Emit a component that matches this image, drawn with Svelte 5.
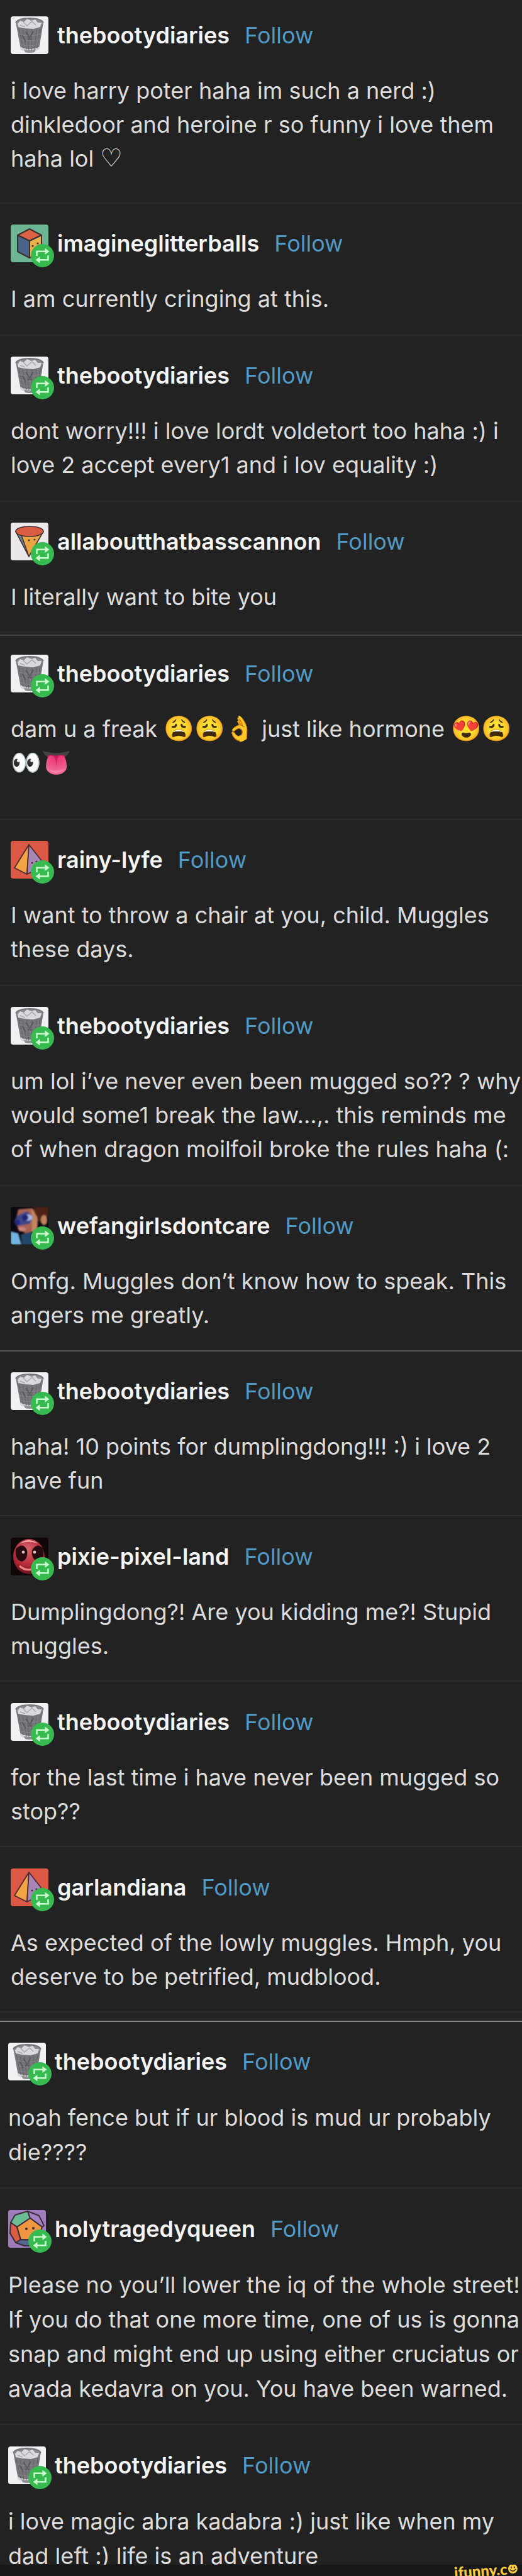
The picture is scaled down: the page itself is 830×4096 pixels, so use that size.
<script>
  const sections = [
    {
      id: 'opening',
      posts: [
        { user: 'thebootydiaries', avatar: 'bin', original: true, roomy: true, lines: ['i love harry poter haha im such a nerd :)', 'dinkledoor and heroine r so funny i love them', 'haha lol ♡'] },
        { user: 'imagineglitterballs', avatar: 'cube', lines: ['I am currently cringing at this.'] },
        { user: 'thebootydiaries', avatar: 'bin', lines: ['dont worry!!! i love lordt voldetort too haha :) i', 'love 2 accept every1 and i lov equality :)'] },
        { user: 'allaboutthatbasscannon', avatar: 'cone', lines: ['I literally want to bite you'] }
      ]
    },
    {
      id: 'middle',
      posts: [
        { user: 'thebootydiaries', avatar: 'bin', airy: true, lines: ['dam u a freak 😩😩👌 just like hormone 😍😩', '👀👅'] },
        { user: 'rainy-lyfe', avatar: 'pyramid', lines: ['I want to throw a chair at you, child. Muggles', 'these days.'] },
        { user: 'thebootydiaries', avatar: 'bin', lines: ['um lol i’ve never even been mugged so?? ? why', 'would some1 break the law...,. this reminds me', 'of when dragon moilfoil broke the rules haha (:'] },
        { user: 'wefangirlsdontcare', avatar: 'hero', lines: ['Omfg. Muggles don’t know how to speak. This', 'angers me greatly.'] }
      ]
    },
    {
      id: 'later',
      posts: [
        { user: 'thebootydiaries', avatar: 'bin', lines: ['haha! 10 points for dumplingdong!!! :) i love 2', 'have fun'] },
        { user: 'pixie-pixel-land', avatar: 'mask', lines: ['Dumplingdong?! Are you kidding me?! Stupid', 'muggles.'] },
        { user: 'thebootydiaries', avatar: 'bin', lines: ['for the last time i have never been mugged so', 'stop??'] },
        { user: 'garlandiana', avatar: 'pyramid', lines: ['As expected of the lowly muggles. Hmph, you', 'deserve to be petrified, mudblood.'] }
      ]
    },
    {
      id: 'closing',
      posts: [
        { user: 'thebootydiaries', avatar: 'bin', lines: ['noah fence but if ur blood is mud ur probably', 'die????'] },
        { user: 'holytragedyqueen', avatar: 'dodeca', lines: ['Please no you’ll lower the iq of the whole street!', 'If you do that one more time, one of us is gonna', 'snap and might end up using either cruciatus or', 'avada kedavra on you. You have been warned.'] },
        { user: 'thebootydiaries', avatar: 'bin', lines: ['i love magic abra kadabra :) just like when my', 'dad left :) life is an adventure'] }
      ]
    }
  ];

  // Splits a line so that symbols and emoji can take their own font and size.
  const pieces = (line) => line.split(/(♡|\p{Extended_Pictographic}+)/u).filter(Boolean);
  const kind = (s) => (s === '♡' ? 'heart' : /^\p{Extended_Pictographic}/u.test(s) ? 'emoji' : '');
</script>

{#snippet picture(name)}
  <svg class="picture" viewBox="0 0 60 60" aria-hidden="true">
    {#if name === 'bin'}
      <rect width="60" height="60" fill="#f1f0f3" />
      <path d="M8 9 L52 9 L45 52 Q30 61 16 52 Z" fill="#77767a" />
      <path d="M15 48 Q30 56 46 48 L45 53 Q30 61 16 53 Z" fill="#d6d5d9" />
      <path d="M21 52 Q30 56 40 52 L38 57 Q30 59 23 57 Z" fill="#8f8e93" />
      <g fill="none" stroke="#626165" stroke-width="1">
        <path d="M13 20 L20 51 M19 21 L25 53 M26 21 L29 54 M34 21 L33 54 M41 21 L38 53 M47 20 L42 51" />
        <path d="M12 28 Q30 34 48 28 M13 36 Q30 42 47 36 M15 44 Q30 50 45 44" stroke="#858489" />
      </g>
      <path d="M24 25 l9 13 M36 24 l-8 14 M18 30 l6 10" stroke="#4b4a4e" stroke-width="2" opacity=".6" />
      <ellipse cx="30" cy="10" rx="22" ry="7" fill="#8a898e" />
      <path d="M11 12 L15 7 L21 9 L26 4 L33 7 L39 5 L43 10 L49 10 L47 17 L36 20 L22 19 L12 17 Z" fill="#dad9dd" />
      <path d="M20 9 l6 6 l8 -7 l6 6 M15 14 l8 3" fill="none" stroke="#aaa9ae" stroke-width="1.5" />
      <path d="M8 10 Q12 3 30 3 Q48 3 52 10" fill="none" stroke="#77767b" stroke-width="2" />
    {:else if name === 'cube'}
      <rect width="60" height="60" fill="#6db592" />
      <g stroke="#39302f" stroke-width="2" stroke-linejoin="round">
        <path d="M30 7 L49 17 L30 26 L11 17 Z" fill="#db6245" />
        <path d="M11 17 L30 26 L30 53 L11 43 Z" fill="#48648a" />
        <path d="M49 17 L30 26 L30 53 L49 43 Z" fill="#eab04b" />
      </g>
      <circle cx="35" cy="34" r="1.6" fill="#39302f" /><circle cx="43" cy="30" r="1.6" fill="#39302f" />
    {:else if name === 'cone'}
      <rect width="60" height="60" fill="#ebe8e9" />
      <g stroke="#453531" stroke-width="1.6" stroke-linejoin="round">
        <path d="M8 14 L29 54 L52 14 Z" fill="#eaa443" />
        <path d="M8 14 L29 54 L17 20 Z" fill="#67869b" />
        <ellipse cx="30" cy="14" rx="22" ry="8" fill="#db5c43" />
      </g>
      <circle cx="29" cy="28" r="1.5" fill="#453531" /><circle cx="38" cy="27" r="1.5" fill="#453531" />
    {:else if name === 'pyramid'}
      <rect width="60" height="60" fill="#dc5945" />
      <g stroke="#4d2b32" stroke-width="1.8" stroke-linejoin="round">
        <path d="M29 6 L6 43 L26 53 Z" fill="#f2a345" />
        <path d="M29 6 L26 53 L55 39 Z" fill="#a886b6" />
      </g>
      <circle cx="34" cy="35" r="1.5" fill="#4d2b32" /><circle cx="41" cy="33" r="1.5" fill="#4d2b32" />
    {:else if name === 'dodeca'}
      <rect width="60" height="60" fill="#9d7bbd" />
      <g stroke="#3a2c38" stroke-width="2" stroke-linejoin="round">
        <path d="M31 2 L11 8 L4 20 L14 27 L35 13 Z" fill="#6cbb93" />
        <path d="M31 2 L49 9 L57 25 L54 27 L35 13 Z" fill="#a581c4" />
        <path d="M4 20 L3 37 L12 52 L20 47 L14 27 Z" fill="#db5b43" />
        <path d="M35 13 L14 27 L20 47 L46 48 L54 27 Z" fill="#ee9640" />
        <path d="M20 47 L12 52 L26 57 L42 57 L46 48 Z" fill="#54678e" />
      </g>
      <circle cx="29" cy="30" r="2" fill="#3a2c38" /><circle cx="40" cy="29" r="2" fill="#3a2c38" />
    {:else if name === 'hero'}
      <defs><filter id="soft"><feGaussianBlur stdDeviation="1.3" /></filter></defs>
      <rect width="60" height="60" fill="#0b0a12" />
      <g filter="url(#soft)">
        <path d="M12 4 L34 2 L44 14 L42 38 L24 42 L12 36 L8 22 Z" fill="#a9624f" />
        <path d="M36 0 L60 0 L60 14 L48 26 L40 16 Z" fill="#4f2215" />
        <path d="M33 2 L42 16 L42 40 L34 40 Z" fill="#c58461" />
        <ellipse cx="53" cy="21" rx="5" ry="8" fill="#c0835c" />
        <path d="M10 14 L26 7 L36 16 L30 27 L12 30 L6 24 Z" fill="#3c4788" />
        <ellipse cx="27" cy="17" rx="8" ry="5" fill="#aab6dc" />
        <circle cx="23" cy="17" r="5" fill="#1a2676" />
        <ellipse cx="11" cy="25" rx="4" ry="5" fill="#262a86" />
        <path d="M12 33 Q20 30 25 35 Q20 41 13 38 Z" fill="#c9837b" />
        <path d="M0 39 L12 42 L17 60 L0 60 Z" fill="#70b5df" />
        <path d="M16 44 L30 40 L44 46 L40 60 L18 60 Z" fill="#24466b" />
      </g>
    {:else if name === 'mask'}
      <defs>
        <radialGradient id="glow" cx=".45" cy=".3" r=".75">
          <stop offset="0" stop-color="#d9646d" /><stop offset=".6" stop-color="#b32a37" /><stop offset="1" stop-color="#570f17" />
        </radialGradient>
      </defs>
      <rect width="60" height="60" fill="#100708" />
      <ellipse cx="29" cy="30" rx="25" ry="28" fill="url(#glow)" />
      <path d="M15 9 Q29 -1 43 9 Q29 4 15 9" fill="#f0a6a9" />
      <path d="M8 18 Q20 6 26 20 Q28 34 18 38 Q6 36 8 18 Z" fill="#260a0f" />
      <path d="M34 20 Q42 6 52 18 Q54 36 42 38 Q32 32 34 20 Z" fill="#260a0f" />
      <circle cx="20" cy="23" r="2.4" fill="#dfc3c3" /><circle cx="38" cy="23" r="2.4" fill="#dfc3c3" />
      <path d="M14 45 Q27 56 40 47" fill="none" stroke="#ef8489" stroke-width="3" />
    {/if}
  </svg>
{/snippet}

<main class="thread">
  {#each sections as section (section.id)}
    <section class={section.id}>
      {#each section.posts as post}
        <article class:roomy={post.roomy} class:airy={post.airy}>
          <header>
            <span class="avatar">
              {@render picture(post.avatar)}
              {#if !post.original}
                <svg class="badge" viewBox="0 0 37 37" role="img" aria-label="Reblogged">
                  <circle cx="18.5" cy="18.5" r="18.5" fill="#37bb51" />
                  <g fill="none" stroke="#c9f9cd" stroke-width="2.6">
                    <path d="M9.5 19 V11.8 H24" />
                    <path d="M27.5 18 V25.2 H13" />
                  </g>
                  <path d="M22.5 6.5 L29.5 11.8 L22.5 17 Z M14.5 20 L7.5 25.2 L14.5 30.5 Z" fill="#c9f9cd" />
                </svg>
              {/if}
            </span>
            <h2>{post.user}</h2>
            <button type="button">Follow</button>
          </header>
          <p>{#each post.lines as line}<span class="line">{#each pieces(line) as piece}<span class={kind(piece)}>{piece}</span>{/each}</span>{/each}</p>
        </article>
      {/each}
    </section>
  {/each}
  <footer>
    <span class="mark">ifunny.c<svg viewBox="0 0 16 16" aria-hidden="true"><circle cx="8" cy="8" r="8" fill="#fdcb3c" /><ellipse cx="5.4" cy="5.6" rx="1" ry="1.7" fill="#181818" /><ellipse cx="10.6" cy="5.6" rx="1" ry="1.7" fill="#181818" /><path d="M3 9 Q8 15 13 9" fill="none" stroke="#181818" stroke-width="1.4" /></svg></span>
  </footer>
</main>

<style>
  :global(body) { margin: 0; background: #222; }
  .thread {
    overflow: hidden;
    background: #222;
    color: #dcdcdc;
    font: 400 36px/54px Inter, sans-serif;
  }
  section {
    --top: 33px;
    --bottom: 30px;
    --gap: 31px;
    --side: 17px;
  }
  article {
    padding: var(--top) 0 var(--bottom) var(--side);
    border-bottom: 2px solid #2c2c2c;
  }
  header { display: flex; align-items: center; height: 60px; margin-bottom: var(--gap); }
  .avatar { position: relative; flex: none; width: 60px; height: 60px; margin-right: 14px; }
  .picture { display: block; width: 60px; height: 60px; border-radius: 4px; }
  .badge { position: absolute; right: -9px; bottom: -8px; width: 37px; height: 37px; }
  h2 { margin: 0; font-size: 36px; font-weight: 600; line-height: 60px; color: #f4f4f4; }
  button {
    margin: 0 0 0 24px;
    padding: 0;
    border: 0;
    background: none;
    color: #519ac6;
    font: 400 36px/60px Inter, sans-serif;
    cursor: pointer;
  }
  p { margin: 0; }
  .line { display: block; height: 1lh; white-space: pre; }
  .emoji { font-family: "Noto Color Emoji", sans-serif; font-size: 39px; line-height: 1; }
  .heart { font-family: "DejaVu Sans", sans-serif; font-size: 40px; font-weight: 200; line-height: 1; }

  .opening article:first-child { padding-top: 26px; }
  .roomy { padding-bottom: 43px; }
  .airy { padding-bottom: 62px; }

  .opening { padding-bottom: 3px; border-bottom: 2px solid #444; }
  .opening article:last-child { padding-bottom: 28px; }
  .middle { border-bottom: 2px solid #555; }
  .middle article:first-child { padding-top: 30px; }
  .middle article:last-child { padding-bottom: 29px; border-bottom: 0; }
  .later { --top: 34px; --bottom: 28px; padding-bottom: 13px; border-bottom: 2px solid #868686; }
  .later article:first-child { padding-top: 33px; }
  .closing { --top: 34px; --bottom: 28px; --gap: 32px; --side: 13px; line-height: 55px; }
  .closing article:first-child { padding-top: 33px; }
  .closing article:last-child { padding-bottom: 0; border-bottom: 0; }

  footer {
    position: relative;
    display: flex;
    justify-content: flex-end;
    height: 18px;
    margin-top: -14px;
    padding-right: 7px;
    overflow: hidden;
    background: #181818;
  }
  .mark {
    display: flex;
    align-items: center;
    gap: 1px;
    height: 18px;
    color: #fdcb3c;
    font: 900 24px/18px Lato, sans-serif;
    transform: rotate(-4deg);
  }
  .mark svg { width: 15px; height: 15px; }
</style>
